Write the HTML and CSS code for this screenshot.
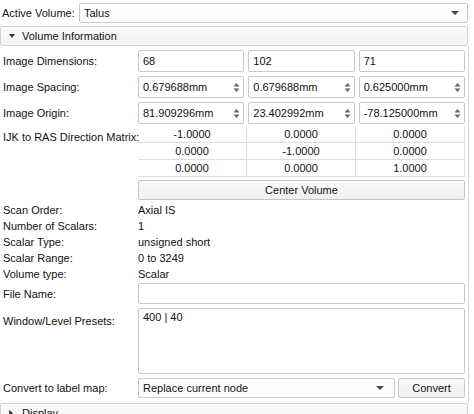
FILE: index.html
```html
<!DOCTYPE html>
<html lang="en">

<head>
    <meta charset="UTF-8">
    <meta name="viewport" content="width=device-width, initial-scale=1.0">
    <title>Volumes</title>
    <link rel="stylesheet" href="styles.css">
</head>

<body>
    <!-- 볼륨 선택 -->
    <div class="active-row">
        <span class="active-lbl">Active Volume:</span>
        <div class="combo grow"><span>Talus</span><i class="caret"></i></div>
    </div>

    <!-- Volume Information 섹션 -->
    <div class="sec-head"><i class="arrow-down"></i>Volume Information</div>
    <div class="sec-body">
        <div class="frow">
            <span class="flbl">Image Dimensions:</span>
            <div class="trio">
                <div class="field">68</div>
                <div class="field">102</div>
                <div class="field">71</div>
            </div>
        </div>
        <div class="frow">
            <span class="flbl">Image Spacing:</span>
            <div class="trio">
                <div class="field spin">0.679688mm<span class="spinbtn"><svg width="7" height="11" viewBox="0 0 7 11"><path d="M0.5 4.5 L3.5 1 L6.5 4.5Z M0.5 6.5 L3.5 10 L6.5 6.5Z" fill="#666"/></svg></span></div>
                <div class="field spin">0.679688mm<span class="spinbtn"><svg width="7" height="11" viewBox="0 0 7 11"><path d="M0.5 4.5 L3.5 1 L6.5 4.5Z M0.5 6.5 L3.5 10 L6.5 6.5Z" fill="#666"/></svg></span></div>
                <div class="field spin">0.625000mm<span class="spinbtn"><svg width="7" height="11" viewBox="0 0 7 11"><path d="M0.5 4.5 L3.5 1 L6.5 4.5Z M0.5 6.5 L3.5 10 L6.5 6.5Z" fill="#666"/></svg></span></div>
            </div>
        </div>
        <div class="frow">
            <span class="flbl">Image Origin:</span>
            <div class="trio">
                <div class="field spin">81.909296mm<span class="spinbtn"><svg width="7" height="11" viewBox="0 0 7 11"><path d="M0.5 4.5 L3.5 1 L6.5 4.5Z M0.5 6.5 L3.5 10 L6.5 6.5Z" fill="#666"/></svg></span></div>
                <div class="field spin">23.402992mm<span class="spinbtn"><svg width="7" height="11" viewBox="0 0 7 11"><path d="M0.5 4.5 L3.5 1 L6.5 4.5Z M0.5 6.5 L3.5 10 L6.5 6.5Z" fill="#666"/></svg></span></div>
                <div class="field spin">-78.125000mm<span class="spinbtn"><svg width="7" height="11" viewBox="0 0 7 11"><path d="M0.5 4.5 L3.5 1 L6.5 4.5Z M0.5 6.5 L3.5 10 L6.5 6.5Z" fill="#666"/></svg></span></div>
            </div>
        </div>

        <!-- 방향 행렬 -->
        <div class="mrow">
            <span class="flbl mlbl">IJK to RAS Direction Matrix:</span>
            <div class="matrix">
                <div class="cell">-1.0000</div>
                <div class="cell">0.0000</div>
                <div class="cell">0.0000</div>
                <div class="cell">0.0000</div>
                <div class="cell">-1.0000</div>
                <div class="cell">0.0000</div>
                <div class="cell">0.0000</div>
                <div class="cell">0.0000</div>
                <div class="cell">1.0000</div>
            </div>
        </div>

        <div class="brow">
            <button class="btn center-btn">Center Volume</button>
        </div>

        <!-- 정보 텍스트 -->
        <div class="info">
            <div class="irow"><span class="flbl">Scan Order:</span><span>Axial IS</span></div>
            <div class="irow"><span class="flbl">Number of Scalars:</span><span>1</span></div>
            <div class="irow"><span class="flbl">Scalar Type:</span><span>unsigned short</span></div>
            <div class="irow"><span class="flbl">Scalar Range:</span><span>0 to 3249</span></div>
            <div class="irow"><span class="flbl">Volume type:</span><span>Scalar</span></div>
        </div>

        <div class="frow file-row">
            <span class="flbl">File Name:</span>
            <div class="field grow"></div>
        </div>

        <div class="frow wl-row">
            <span class="flbl wl-lbl">Window/Level Presets:</span>
            <div class="field grow area">400 | 40</div>
        </div>

        <div class="frow conv-row">
            <span class="flbl">Convert to label map:</span>
            <div class="combo grow"><span>Replace current node</span><i class="caret"></i></div>
            <button class="btn conv-btn">Convert</button>
        </div>
    </div>

    <!-- Display 섹션 (접힘) -->
    <div class="sec-head last"><i class="arrow-right"></i>Display</div>
</body>

</html>
```

FILE: styles.css
```css
html,
body {
    margin: 0;
    padding: 0;
}

body {
    width: 474px;
    height: 414px;
    overflow: hidden;
    background: #fff;
    color: #111;
    font: 11px/14px "Liberation Sans", Arial, sans-serif;
}

.grow {
    flex: 1;
}

/* 상단 볼륨 선택줄 */
.active-row {
    display: flex;
    align-items: center;
    padding: 3px 6px 0 2px;
    height: 20px;
}

.active-lbl {
    width: 77px;
}

/* 콤보박스 */
.combo {
    box-sizing: border-box;
    height: 20px;
    display: flex;
    align-items: center;
    justify-content: space-between;
    padding: 0 8px 0 4px;
    border: 1px solid #c9c9c9;
    border-radius: 2px;
    background: #fdfdfd;
}

.caret {
    width: 0;
    height: 0;
    border-left: 4px solid transparent;
    border-right: 4px solid transparent;
    border-top: 4px solid #4a4a4a;
}

/* 섹션 헤더 */
.sec-head {
    box-sizing: border-box;
    width: 468px;
    height: 20px;
    margin-top: 3px;
    display: flex;
    align-items: center;
    padding-left: 8px;
    border: 1px solid #d2d2d2;
    border-radius: 2px;
    background: linear-gradient(#fbfbfb, #f3f3f3);
}

.sec-head.last {
    margin-top: 0;
}

.arrow-down {
    width: 0;
    height: 0;
    margin-right: 7px;
    border-left: 3.5px solid transparent;
    border-right: 3.5px solid transparent;
    border-top: 4px solid #3c3c3c;
}

.arrow-right {
    width: 0;
    height: 0;
    margin-right: 9px;
    border-top: 3.5px solid transparent;
    border-bottom: 3.5px solid transparent;
    border-left: 4px solid #3c3c3c;
}

/* 섹션 내용 */
.sec-body {
    box-sizing: border-box;
    width: 469px;
    height: 357px;
    padding: 4px 3px 0 3px;
    border-right: 1px solid #d6d6d6;
}

.frow {
    display: flex;
    align-items: center;
    height: 22px;
    margin-bottom: 4px;
}

.flbl {
    width: 135px;
    flex: none;
    white-space: nowrap;
}

.trio {
    flex: 1;
    display: grid;
    grid-template-columns: repeat(3, 1fr);
    gap: 4px;
    height: 100%;
}

/* 입력칸 */
.field {
    box-sizing: border-box;
    height: 100%;
    display: flex;
    align-items: center;
    padding-left: 4px;
    border: 1px solid #c9c9c9;
    border-radius: 2px;
    background: #fff;
}

.spin {
    position: relative;
}

.spinbtn {
    position: absolute;
    top: 0;
    right: 0;
    bottom: 0;
    width: 13px;
    display: flex;
    align-items: center;
    justify-content: center;
}

/* 행렬 */
.mrow {
    display: flex;
    margin-top: -2px;
}

.mlbl {
    padding-top: 4px;
}

.matrix {
    flex: 1;
    display: grid;
    grid-template-columns: repeat(3, 1fr);
}

.cell {
    height: 16px;
    line-height: 16px;
    text-align: center;
    border-right: 1px solid #dcdcdc;
    border-bottom: 1px solid #dcdcdc;
}

/* 버튼 */
.btn {
    box-sizing: border-box;
    height: 20px;
    padding: 0;
    border: 1px solid #c6c6c6;
    border-radius: 2px;
    background: linear-gradient(#fafafa, #f0f0f0);
    color: #111;
    font: inherit;
}

.brow {
    display: flex;
    margin-top: 3px;
    padding-left: 135px;
}

.center-btn {
    flex: 1;
}

/* 정보 텍스트 */
.info {
    margin-top: 2px;
}

.irow {
    display: flex;
    align-items: center;
    height: 16px;
}

.file-row {
    margin-top: 1px;
    height: 21px;
}

.wl-row {
    height: 66px;
    align-items: flex-start;
}

.wl-lbl {
    padding-top: 6px;
}

.area {
    align-items: flex-start;
    padding-top: 1px;
}

.conv-row {
    height: 20px;
}

.conv-row .combo {
    padding-right: 10px;
}

.conv-btn {
    width: 67px;
    margin-left: 3px;
}
```
